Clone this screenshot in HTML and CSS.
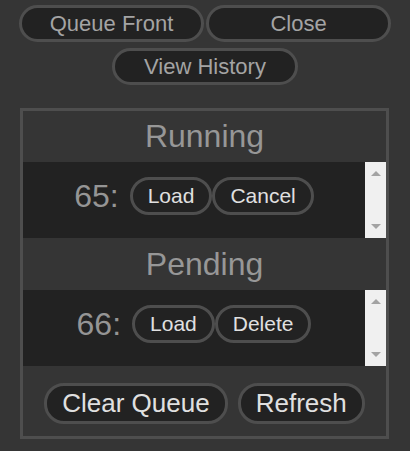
FILE: index.html
```html
<!DOCTYPE html>
<html lang="en">

<head>
  <meta charset="UTF-8">
  <meta name="viewport" content="width=device-width, initial-scale=1.0">
  <title>Queue</title>
  <link rel="stylesheet" href="styles.css">
</head>

<body>
  <div class="menu">
    <div class="menu-row">
      <button class="menu-btn">Queue Front</button>
      <button class="menu-btn">Close</button>
    </div>
    <div class="menu-center">
      <button class="menu-btn history">View History</button>
    </div>
  </div>

  <section class="queue">
    <h4 class="queue-title">Running</h4>
    <div class="queue-list">
      <div class="queue-items">
        <div class="queue-item">
          <span class="queue-num">65:</span>
          <button class="item-btn">Load</button>
          <button class="item-btn">Cancel</button>
        </div>
      </div>
      <div class="scrollbar">
        <span class="arrow up"></span>
        <span class="arrow down"></span>
      </div>
    </div>

    <h4 class="queue-title">Pending</h4>
    <div class="queue-list">
      <div class="queue-items">
        <div class="queue-item">
          <span class="queue-num">66:</span>
          <button class="item-btn">Load</button>
          <button class="item-btn">Delete</button>
        </div>
      </div>
      <div class="scrollbar">
        <span class="arrow up"></span>
        <span class="arrow down"></span>
      </div>
    </div>

    <div class="queue-actions">
      <button class="action-btn">Clear Queue</button>
      <button class="action-btn">Refresh</button>
    </div>
  </section>
</body>

</html>
```

FILE: styles.css
```css
body {
  margin: 0;
  background: #353535;
  font-family: "Liberation Sans", Arial, sans-serif;
}

button {
  font-family: inherit;
  background: #222;
  border: 3px solid #4e4e4e;
  border-radius: 20px;
  box-sizing: border-box;
  padding: 0 15px;
  cursor: pointer;
}

.menu {
  padding: 5px 19px 0;
}

.menu-row {
  display: flex;
  gap: 2px;
}

.menu-btn {
  flex: 1;
  height: 37px;
  font-size: 22px;
  color: #a4a4a4;
}

.menu-center {
  display: flex;
  justify-content: center;
  margin-top: 6px;
}

.menu-btn.history {
  flex: none;
  width: 186px;
}

.queue {
  margin: 23px 21px 0 20px;
  border: 3px solid #4e4e4e;
  height: 331px;
  box-sizing: border-box;
}

.queue-title {
  margin: 0;
  height: 51px;
  display: flex;
  align-items: center;
  justify-content: center;
  font-size: 32px;
  font-weight: normal;
  color: #979797;
}

.queue-title+.queue-list+.queue-title {
  height: 52px;
}

.queue-list {
  display: flex;
  height: 76px;
  background: #222;
}

.queue-items {
  flex: 1;
  padding-top: 15px;
}

.queue-item {
  display: flex;
  justify-content: center;
  align-items: center;
}

.queue-num {
  font-size: 32px;
  color: #959595;
  margin-right: 11px;
}

.item-btn {
  height: 38px;
  font-size: 21px;
  color: #e0e0e0;
}

.scrollbar {
  width: 21px;
  background: #f0f0f0;
  display: flex;
  flex-direction: column;
  justify-content: space-between;
  align-items: center;
  padding: 9px 0;
  box-sizing: border-box;
}

.arrow {
  width: 0;
  height: 0;
  border-left: 5px solid transparent;
  border-right: 5px solid transparent;
}

.arrow.up {
  border-bottom: 5px solid #a3a3a3;
}

.arrow.down {
  border-top: 5px solid #a3a3a3;
}

.queue-actions {
  display: flex;
  justify-content: center;
  gap: 10px;
  padding-top: 17px;
}

.action-btn {
  height: 41px;
  font-size: 26px;
  color: #e0e0e0;
}
```
